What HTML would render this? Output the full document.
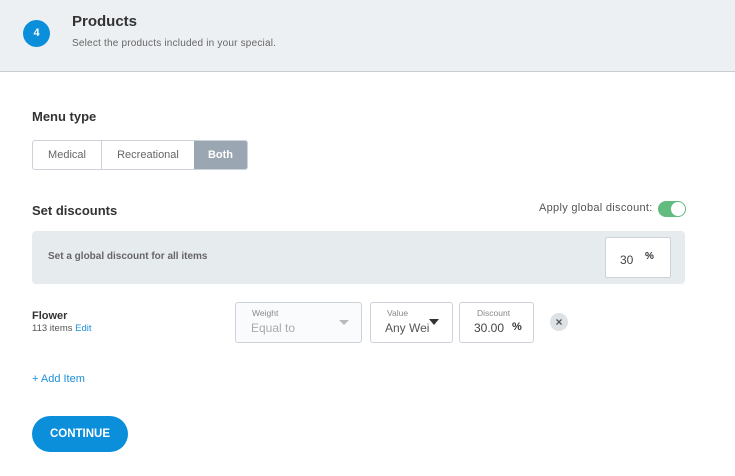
<!DOCTYPE html>
<html><head><style>
*{box-sizing:border-box;margin:0;padding:0}
body{width:735px;height:476px;background:#fff;font-family:"Liberation Sans",sans-serif;position:relative;overflow:hidden;color:#333}
.a{position:absolute}
</style></head><body>
<div class="a" style="left:0;top:0;width:735px;height:72px;background:#edf0f3;border-bottom:1px solid #c8cdd2"></div>
<div class="a" style="left:23px;top:20px;width:27px;height:27px;border-radius:50%;background:#0b8fdb;color:#fff;font-size:11px;font-weight:bold;text-align:center;line-height:27px">4</div>
<div class="a" style="left:72px;top:13px;font-size:15px;font-weight:bold;color:#333">Products</div>
<div class="a" style="left:72px;top:38px;font-size:10px;letter-spacing:0.2px;color:#666">Select the products included in your special.</div>

<div class="a" style="left:32px;top:109px;font-size:13px;font-weight:bold;color:#333">Menu type</div>
<div class="a" style="left:32px;top:140px;width:216px;height:30px;border:1px solid #ccd2d8;border-radius:3px;display:flex;font-size:11px;color:#666;overflow:hidden">
<div style="width:69px;text-align:center;line-height:28px;border-right:1px solid #ccd2d8">Medical</div>
<div style="width:92px;text-align:center;line-height:28px">Recreational</div>
<div style="flex:1;background:#9aa6b1;color:#fff;font-weight:bold;text-align:center;line-height:28px">Both</div>
</div>

<div class="a" style="left:32px;top:203px;font-size:13px;font-weight:bold;color:#333">Set discounts</div>
<div class="a" style="left:539px;top:202px;font-size:11px;letter-spacing:0.3px;color:#555">Apply global discount:</div>
<div class="a" style="left:658px;top:201px;width:28px;height:16px;border-radius:8px;background:#62bb7f"></div>
<div class="a" style="left:671px;top:202px;width:14px;height:14px;border-radius:50%;background:#fff"></div>

<div class="a" style="left:32px;top:231px;width:653px;height:53px;background:#e6ebee;border-radius:4px"></div>
<div class="a" style="left:48px;top:251px;font-size:10px;font-weight:bold;color:#666">Set a global discount for all items</div>
<div class="a" style="left:605px;top:237px;width:66px;height:41px;background:#fff;border:1px solid #ccd2d8;border-radius:2px"></div>
<div class="a" style="left:620px;top:253px;font-size:12px;color:#444">30</div>
<div class="a" style="left:645px;top:251px;font-size:10px;font-weight:bold;color:#333">%</div>

<div class="a" style="left:32px;top:310px;font-size:11px;font-weight:bold;color:#333">Flower</div>
<div class="a" style="left:32px;top:323px;font-size:9.5px;color:#555">113 items <span style="color:#1c8fd8">Edit</span></div>

<div class="a" style="left:235px;top:302px;width:127px;height:41px;border:1px solid #ccd2d8;border-radius:3px;background:#fafbfc"></div>
<div class="a" style="left:252px;top:308px;font-size:8.5px;color:#888">Weight</div>
<div class="a" style="left:251px;top:321px;font-size:12px;color:#aaa">Equal to</div>
<div class="a" style="left:339px;top:320px;border-left:5px solid transparent;border-right:5px solid transparent;border-top:5px solid #bbb"></div>

<div class="a" style="left:370px;top:302px;width:83px;height:41px;border:1px solid #ccd2d8;border-radius:3px"></div>
<div class="a" style="left:387px;top:308px;font-size:8.5px;color:#888">Value</div>
<div class="a" style="left:385px;top:321px;width:44px;overflow:hidden;white-space:nowrap;font-size:12px;color:#555">Any Weight</div>
<div class="a" style="left:429px;top:319px;border-left:5px solid transparent;border-right:5px solid transparent;border-top:6px solid #333"></div>

<div class="a" style="left:459px;top:302px;width:75px;height:41px;border:1px solid #ccd2d8;border-radius:3px"></div>
<div class="a" style="left:477px;top:308px;font-size:8.5px;color:#888">Discount</div>
<div class="a" style="left:474px;top:321px;font-size:12px;color:#444">30.00</div>
<div class="a" style="left:512px;top:321px;font-size:11px;font-weight:bold;color:#333">%</div>

<div class="a" style="left:550px;top:313px;width:18px;height:18px;border-radius:50%;background:#dde2e6;color:#555;font-size:12px;font-weight:bold;text-align:center;line-height:18px">×</div>

<div class="a" style="left:32px;top:373px;font-size:11px;color:#1c8fd8">+ Add Item</div>
<div class="a" style="left:32px;top:416px;width:96px;height:36px;border-radius:18px;background:#0b8fdb;color:#fff;font-size:11.5px;font-weight:bold;text-align:center;line-height:36px">CONTINUE</div>
</body></html>
